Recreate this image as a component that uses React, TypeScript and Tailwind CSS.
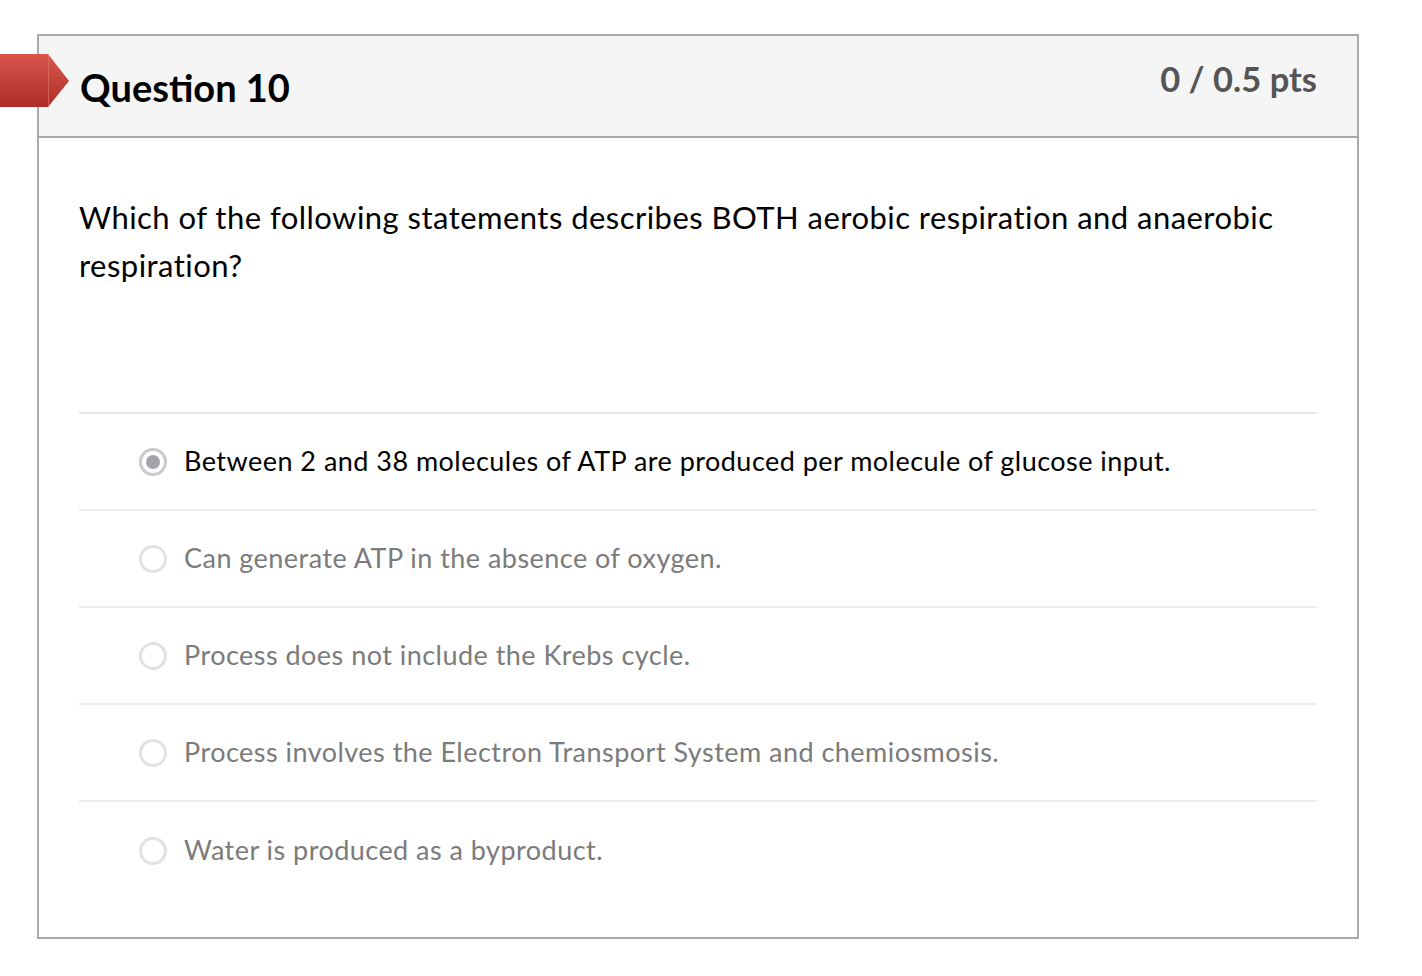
import React from "react";

const answers = [
  { text: "Between 2 and 38 molecules of ATP are produced per molecule of glucose input.", selected: true },
  { text: "Can generate ATP in the absence of oxygen.", selected: false },
  { text: "Process does not include the Krebs cycle.", selected: false },
  { text: "Process involves the Electron Transport System and chemiosmosis.", selected: false },
  { text: "Water is produced as a byproduct.", selected: false },
];

function Flag() {
  return (
    <svg className="absolute left-0 top-[54px]" width="70" height="54" viewBox="0 0 70 54">
      <defs>
        <linearGradient id="fg" x1="0" y1="0" x2="0" y2="1">
          <stop offset="0" stopColor="#d9564c" />
          <stop offset="1" stopColor="#ad2e27" />
        </linearGradient>
      </defs>
      <path d="M0 0 H48 L69 27 L48 53 H0 Z" fill="url(#fg)" />
      <line x1="48.5" y1="0" x2="48.5" y2="53" stroke="#e27a70" strokeOpacity="0.6" strokeWidth="1" />
    </svg>
  );
}

function Radio({ selected }: { selected: boolean }) {
  if (selected) {
    return (
      <div className="w-[28px] h-[28px] rounded-full border-[3px] border-[#c9c9ce] bg-white flex items-center justify-center shrink-0">
        <div className="w-[14px] h-[14px] rounded-full bg-[#a3a3ab]" />
      </div>
    );
  }
  return <div className="w-[28px] h-[28px] rounded-full border-[3.5px] border-[#e2e2e2] bg-white shrink-0" />;
}

export default function App() {
  return (
    <div className="w-[1422px] h-[976px] bg-white relative" style={{ fontFamily: "Lato, 'Open Sans', sans-serif" }}>
      <div className="pt-[34px] pl-[37px]">
        <div className="w-[1322px] h-[905px] border-2 border-[#a9a9a9] bg-white">
          <div className="h-[102px] bg-[#f5f5f5] border-b-2 border-[#a9a9a9] flex justify-between pl-[41px] pr-[40px]">
            <div className="pt-[28px] text-[38px] leading-[46px] font-bold text-black">Question 10</div>
            <div className="pt-[23px] text-[34.5px] leading-[40px] font-bold text-[#555555]">0 / 0.5 pts</div>
          </div>
          <div className="px-[40px] pt-[55px]">
            <div className="text-[31px] leading-[48px] text-black tracking-[0.46px]">
              Which of the following statements describes BOTH aerobic respiration and anaerobic respiration?
            </div>
            <div className="mt-[123px] border-t-2 border-[#e6e6e6]">
              {answers.map((a, i) => (
                <div
                  key={i}
                  className={`h-[97px] flex items-center pl-[60px] gap-[17px] ${i < answers.length - 1 ? "border-b-2 border-[#ececec]" : ""}`}
                >
                  <Radio selected={a.selected} />
                  <span className={`text-[27px] tracking-[0.47px] ${a.selected ? "text-black" : "text-[#7b7b7b]"}`}>{a.text}</span>
                </div>
              ))}
            </div>
          </div>
        </div>
      </div>
      <Flag />
    </div>
  );
}
